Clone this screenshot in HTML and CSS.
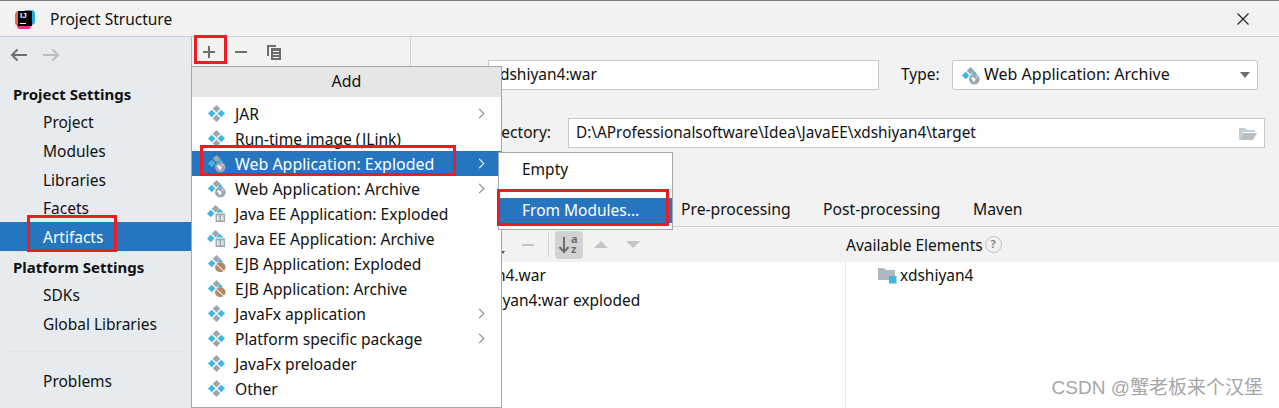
FILE: index.html
```html
<!DOCTYPE html>
<html lang="en">
<head>
<meta charset="utf-8">
<title>Project Structure</title>
<link rel="stylesheet" href="styles.css">
</head>
<body>
<svg class="defs" width="0" height="0" aria-hidden="true">
  <defs>
    <symbol id="art" viewBox="0 0 20 20">
      <path d="M10 1l4 4-4 4-4-4z" fill="#9aa7b0"/>
      <path d="M5 6l4 4-4 4-4-4z" fill="#40b6e0"/>
      <path d="M15 6l4 4-4 4-4-4z" fill="#40b6e0"/>
      <path d="M10 11l4 4-4 4-4-4z" fill="#9aa7b0"/>
    </symbol>
    <symbol id="art-base" viewBox="0 0 20 20">
      <path d="M10 1l4 4-4 4-4-4z" fill="#9aa7b0"/>
      <path d="M5 6l4 4-4 4-4-4z" fill="#40b6e0"/>
      <path d="M14 5l3 4h-6z" fill="#40b6e0"/>
    </symbol>
    <symbol id="art-web" viewBox="0 0 20 20">
      <use href="#art-base"/>
      <circle cx="14" cy="14" r="5.6" fill="#9aa7b0"/>
      <path d="M10.500 12.500c2-1.500 4 0 5 1.500l-1.500 3c-1.500-.5-1.500-2-3.500-4.500z" fill="#fff"/>
      <path d="M15.500 10.500l2 1-1 1.500z" fill="#fff"/>
    </symbol>
    <symbol id="art-ee" viewBox="0 0 20 20">
      <path d="M9 1l4 4-4 4-4-4z" fill="#9aa7b0"/>
      <path d="M4 6l4 4-4 4-4-4z" fill="#40b6e0"/>
      <path d="M13.500 5l4 4h-8z" fill="#40b6e0"/>
      <rect x="9" y="10" width="10" height="9" fill="#9aa7b0"/>
      <path d="M10.500 12h3v1h-2v1h2v1h-2v1h2v1h-3zM15 12h3v1h-2v1h2v1h-2v1h2v1h-3z" fill="#fff"/>
    </symbol>
    <symbol id="art-ejb" viewBox="0 0 20 20">
      <use href="#art-base"/>
      <ellipse cx="14" cy="14" rx="5.500" ry="5.200" fill="#b08a68"/>
      <path d="M10 11l8 7" stroke="#f0e6dc" stroke-width="1.200"/>
    </symbol>
  </defs>
</svg>

<div class="window">
  <header class="titlebar">
    <div class="logo">
      <span class="logo-a"></span><span class="logo-b"></span><span class="logo-c"></span>
      <span class="logo-box"><span class="logo-ij">IJ</span><span class="logo-bar"></span></span>
    </div>
    <span class="title">Project Structure</span>
    <svg class="close" width="14" height="14" viewBox="0 0 14 14"><path d="M1.500 1.500l11 11M12.500 1.500l-11 11" stroke="#222" stroke-width="1.200" fill="none"/></svg>
  </header>

  <div class="content">
    <nav class="sidebar">
      <div class="history">
        <svg width="17" height="14" viewBox="0 0 17 14"><path d="M17 7H2M7.500 1.500L2 7l5.500 5.500" stroke="#6e6e6e" stroke-width="2" fill="none"/></svg>
        <svg width="17" height="14" viewBox="0 0 17 14"><path d="M0 7h15M9.500 1.500L15 7l-5.500 5.500" stroke="#bdbdbd" stroke-width="2" fill="none"/></svg>
      </div>
      <div class="side-head">Project Settings</div>
      <a class="side-item">Project</a>
      <a class="side-item">Modules</a>
      <a class="side-item">Libraries</a>
      <a class="side-item">Facets</a>
      <a class="side-item active">Artifacts</a>
      <div class="side-head second">Platform Settings</div>
      <a class="side-item">SDKs</a>
      <a class="side-item">Global Libraries</a>
      <div class="side-sep"></div>
      <a class="side-item">Problems</a>
    </nav>

    <section class="middle">
      <div class="mid-toolbar">
        <svg width="14" height="14" viewBox="0 0 14 14"><path d="M7 1v12M1 7h12" stroke="#6e6e6e" stroke-width="2"/></svg>
        <svg width="14" height="14" viewBox="0 0 14 14"><path d="M1 7h12" stroke="#6e6e6e" stroke-width="2"/></svg>
        <svg width="16" height="16" viewBox="0 0 16 16"><path d="M1 12V1h9v2H3v9z" fill="#6e6e6e"/><path d="M5 4h10v12H5z" fill="#6e6e6e"/><path d="M7 7h6v1H7zM7 10h6v1H7zM7 13h6v1H7z" fill="#f2f2f2"/></svg>
      </div>
      <div class="mid-list"></div>
    </section>

    <main class="main">
      <div class="row-name">
        <label class="lbl-name">Name:</label>
        <div class="field name-field">xdshiyan4:war</div>
        <label class="lbl-type">Type:</label>
        <div class="select">
          <svg class="ic16" width="19" height="19"><use href="#art-web"/></svg>
          <span class="select-text">Web Application: Archive</span>
          <span class="caret"></span>
        </div>
      </div>
      <div class="row-dir">
        <label class="lbl-dir">Output directory:</label>
        <div class="field dir-field">
          <span class="dir-text">D:\AProfessionalsoftware\Idea\JavaEE\xdshiyan4\target</span>
          <svg width="19" height="15" viewBox="0 0 19 15"><path d="M1 14V2h6l2 2h8v2H5L1 14z" fill="#c4cbd1"/><path d="M5 7h14l-4 7H1z" fill="#b8c0c7"/></svg>
        </div>
      </div>
      <div class="tabs">
        <span class="tab tab-out">Output Layout</span>
        <span class="tab tab-pre">Pre-processing</span>
        <span class="tab tab-post">Post-processing</span>
        <span class="tab">Maven</span>
      </div>
      <div class="layout">
        <div class="layout-left">
          <div class="layout-tools">
            <span class="tick"></span>
            <svg class="minus" width="14" height="14" viewBox="0 0 14 14"><path d="M1 7h12" stroke="#c4c4c4" stroke-width="2"/></svg>
            <span class="tool-sep"></span>
            <span class="sort">
              <svg width="24" height="24" viewBox="0 0 24 24"><path d="M7 4v15M2.500 14l4.500 5 4.500-5" stroke="#6e6e6e" stroke-width="2" fill="none"/><text x="14" y="10" class="sort-a">a</text><text x="14" y="20" class="sort-a">z</text></svg>
            </span>
            <span class="tri-up"></span>
            <span class="tri-down"></span>
          </div>
          <div class="tree">
            <div class="tree-row tree-first">xdshiyan4.war</div>
            <div class="tree-row tree-second">xdshiyan4:war exploded</div>
          </div>
        </div>
        <div class="layout-right">
          <div class="avail-head">Available Elements<span class="help">?</span></div>
          <div class="avail-list">
            <div class="avail-row">
              <svg width="20" height="18" viewBox="0 0 20 18"><path d="M1 2h6l2 2h9v10H1z" fill="#afb8c0"/><rect x="12" y="10" width="7.500" height="7.500" fill="#40b6e0"/></svg>
              <span>xdshiyan4</span>
            </div>
          </div>
        </div>
      </div>
    </main>
  </div>

  <div class="menu">
    <div class="menu-title">Add</div>
    <div class="menu-item"><svg width="19" height="19"><use href="#art"/></svg><span>JAR</span><i class="chev"></i></div>
    <div class="menu-item"><svg width="19" height="19"><use href="#art"/></svg><span>Run-time image (JLink)</span></div>
    <div class="menu-item on wide"><svg width="19" height="19"><use href="#art-web"/></svg><span>Web Application: Exploded</span><i class="chev"></i></div>
    <div class="menu-item wide"><svg width="19" height="19"><use href="#art-web"/></svg><span>Web Application: Archive</span><i class="chev"></i></div>
    <div class="menu-item"><svg width="19" height="19"><use href="#art-ee"/></svg><span>Java EE Application: Exploded</span></div>
    <div class="menu-item"><svg width="19" height="19"><use href="#art-ee"/></svg><span>Java EE Application: Archive</span></div>
    <div class="menu-item"><svg width="19" height="19"><use href="#art-ejb"/></svg><span>EJB Application: Exploded</span></div>
    <div class="menu-item"><svg width="19" height="19"><use href="#art-ejb"/></svg><span>EJB Application: Archive</span></div>
    <div class="menu-item"><svg width="19" height="19"><use href="#art"/></svg><span>JavaFx application</span><i class="chev"></i></div>
    <div class="menu-item"><svg width="19" height="19"><use href="#art"/></svg><span>Platform specific package</span><i class="chev"></i></div>
    <div class="menu-item"><svg width="19" height="19"><use href="#art"/></svg><span>JavaFx preloader</span></div>
    <div class="menu-item"><svg width="19" height="19"><use href="#art"/></svg><span>Other</span></div>
  </div>

  <div class="submenu">
    <div class="sub-item">Empty</div>
    <div class="sub-item on">From Modules...</div>
  </div>

  <span class="mark mark-plus"></span>
  <span class="mark mark-art"></span>
  <span class="mark mark-web"></span>
  <span class="mark mark-mod"></span>

  <div class="watermark">CSDN @蟹老板来个汉堡</div>
</div>
</body>
</html>
```
FILE: styles.css
```css
* { box-sizing: border-box; }
html, body { margin: 0; padding: 0; }
body {
  width: 1279px;
  height: 408px;
  overflow: hidden;
  background: #f2f2f2;
  color: #111;
  font: 15.500px/20px "Noto Sans", "Open Sans", sans-serif;
}
.defs { position: absolute; }
.window { position: relative; width: 1279px; height: 408px; overflow: hidden; border-top: 1px solid #7d7d7d; }

.titlebar { height: 36px; display: flex; align-items: center; background: #f2f2f2; border-bottom: 1px solid #cfcfcf; padding: 0 29px 0 15px; }
.logo { position: relative; width: 20px; height: 20px; margin-right: 15px; flex: none; }
.logo span { position: absolute; }
.logo-a { left: 0; top: 2px; width: 10px; height: 15px; background: #f2653a; border-radius: 4px; }
.logo-b { right: 0; top: 1px; width: 12px; height: 15px; background: #29a8e0; border-radius: 4px; }
.logo-c { left: 2px; bottom: 0; width: 14px; height: 6px; background: #f0318c; border-radius: 3px; }
.logo-box { left: 3px; top: 2px; width: 14px; height: 15px; background: #000; }
.logo-ij { position: absolute; left: 2px; top: 1px; color: #fff; font: 700 8px/8px "Liberation Sans", sans-serif; }
.logo-bar { position: absolute; left: 2px; bottom: 2px; width: 6px; height: 1px; background: #fff; }
.title { flex: 1; }
.close { flex: none; }

.content { display: flex; height: 371px; }

.sidebar { width: 192px; flex: none; background: #e6ebf0; border-right: 1px solid #b4b4b4; }
.history { height: 36px; display: flex; align-items: center; gap: 16px; padding: 0 0 0 10px; }
.side-head { height: 28px; line-height: 30px; padding-left: 13px; font-size: 15px; font-weight: 700; margin-top: 6px; }
.side-head.second { margin-top: 0; height: 29px; line-height: 32px; }
.side-item { display: block; height: 28.750px; line-height: 30.500px; padding-left: 43px; }
.side-item.active { background: #2675bf; color: #fff; }
.side-sep { height: 29px; position: relative; }
.side-sep::after { content: ""; position: absolute; left: 8px; right: 8px; top: 14px; height: 1px; background: #dfe3e7; }

.middle { width: 219px; flex: none; border-right: 1px solid #d4d4d4; }
.mid-toolbar { height: 30px; display: flex; align-items: center; gap: 18px; padding: 0 0 0 10px; }
.mid-list { height: 341px; background: #fff; }

.main { flex: 1; min-width: 0; position: relative; }
.row-name { height: 30px; margin-top: 23px; display: flex; align-items: center; }
.lbl-name { width: 77px; padding: 0 0 2px 12px; }
.field { background: #fff; border: 1px solid #c9c9c9; height: 30px; line-height: 26px; }
.name-field { width: 391px; padding-left: 3px; }
.lbl-type { margin-left: 22px; width: 51px; padding-bottom: 2px; }
.select { width: 306px; height: 30px; display: flex; align-items: center; background: #fff; border: 1px solid #c4c4c4; border-radius: 3px; padding: 0 7px 0 8px; }
.ic16 { flex: none; margin-right: 4px; }
.select-text { flex: 1; font-size: 16px; padding-bottom: 2px; }
.caret { width: 0; height: 0; border-left: 5.500px solid transparent; border-right: 5.500px solid transparent; border-top: 6px solid #6e6e6e; }
.row-dir { height: 30px; margin-top: 28px; display: flex; align-items: center; }
.lbl-dir { width: 157px; padding: 0 17px 2px 0; text-align: right; white-space: nowrap; }
.dir-field { width: 697px; display: flex; align-items: center; justify-content: space-between; padding: 0 7px 0 7px; }
.dir-text { font-size: 15.350px; padding-bottom: 2px; }

.tabs { height: 48px; margin-top: 31px; display: flex; align-items: center; border-bottom: 1px solid #d0d0d0; padding: 13px 0 1px; font-size: 15.700px; }
.tab { white-space: nowrap; }
.tab-out { margin-left: 90px; width: 180px; }
.tab-pre { width: 142px; }
.tab-post { width: 150px; }

.layout { display: flex; height: 181px; }
.layout-left { width: 435px; flex: none; }
.layout-tools { height: 35px; display: flex; align-items: center; padding-left: 90px; }
.tick { width: 0; height: 0; margin: 16px 16px 0 0; border-left: 2.500px solid transparent; border-right: 2.500px solid transparent; border-top: 3px solid #555; }
.minus { margin-right: 13px; }
.tool-sep { width: 1px; height: 24px; background: #d4d4d4; margin-right: 6px; }
.sort { width: 28px; height: 28px; background: #d2d2d2; border-radius: 4px; display: flex; align-items: center; justify-content: center; margin-right: 11px; }
.sort-a { font: 700 11px "Noto Sans", sans-serif; fill: #6e6e6e; }
.tri-up { width: 0; height: 0; border-left: 7.500px solid transparent; border-right: 7.500px solid transparent; border-bottom: 7px solid #c4c4c4; margin-right: 18px; }
.tri-down { width: 0; height: 0; border-left: 7.500px solid transparent; border-right: 7.500px solid transparent; border-top: 7px solid #c4c4c4; }
.tree { background: #fff; height: 146px; padding-top: 1px; }
.tree-row { height: 25px; line-height: 25px; white-space: nowrap; }
.tree-first { padding-left: 30px; }
.tree-second { padding-left: 53px; }
.layout-right { flex: 1; }
.avail-head { height: 35px; display: flex; align-items: center; line-height: 18px; }
.help { width: 17px; height: 17px; margin-left: 2px; border: 1.500px solid #b9c2c9; border-radius: 50%; color: #808890; font-size: 11px; font-weight: 700; line-height: 14px; text-align: center; }
.avail-list { background: #fff; height: 146px; border-left: 1px solid #e8e8e8; margin-left: -1px; }
.avail-row { height: 25px; display: flex; align-items: center; gap: 3px; padding-left: 31px; }

.menu { position: absolute; left: 191px; top: 65px; width: 311px; height: 342px; background: #fff; border: 1px solid #a8a8a8; }
.menu-title { height: 30px; line-height: 28px; text-align: center; background: #e6e6e6; font-size: 16px; }
.menu-item { height: 25px; display: flex; align-items: center; padding-left: 15px; position: relative; white-space: nowrap; font-size: 15.600px; }
.menu-item.wide { font-size: 15.950px; }
.menu-title + .menu-item { margin-top: 4px; }
.menu-item svg { flex: none; margin-right: 9px; }
.menu-item.on { background: #2675bf; color: #fff; }
.chev { position: absolute; right: 18px; top: 9px; width: 7px; height: 7px; border-top: 1.500px solid #808080; border-right: 1.500px solid #808080; transform: rotate(45deg); }
.on .chev { border-color: #fff; }

.submenu { position: absolute; left: 498px; top: 151px; width: 175px; height: 78px; background: #fff; border: 1px solid #a8a8a8; padding-top: 3px; }
.sub-item { height: 26px; line-height: 26px; padding-left: 23px; }
.sub-item + .sub-item { margin-top: 16px; height: 25px; line-height: 25px; }
.sub-item.on { background: #2675bf; color: #fff; }

.mark { position: absolute; border: 3px solid #ed1c24; }
.mark-plus { left: 194px; top: 34px; width: 33px; height: 29px; }
.mark-art { left: 27px; top: 214px; width: 90px; height: 37px; }
.mark-web { left: 200px; top: 144px; width: 256px; height: 31px; }
.mark-mod { left: 497px; top: 188px; width: 172px; height: 37px; }

.watermark { position: absolute; right: 16px; top: 376px; color: #a6a6a6; font: 19px/22px "Liberation Sans", "Noto Sans CJK SC", sans-serif; }
```
